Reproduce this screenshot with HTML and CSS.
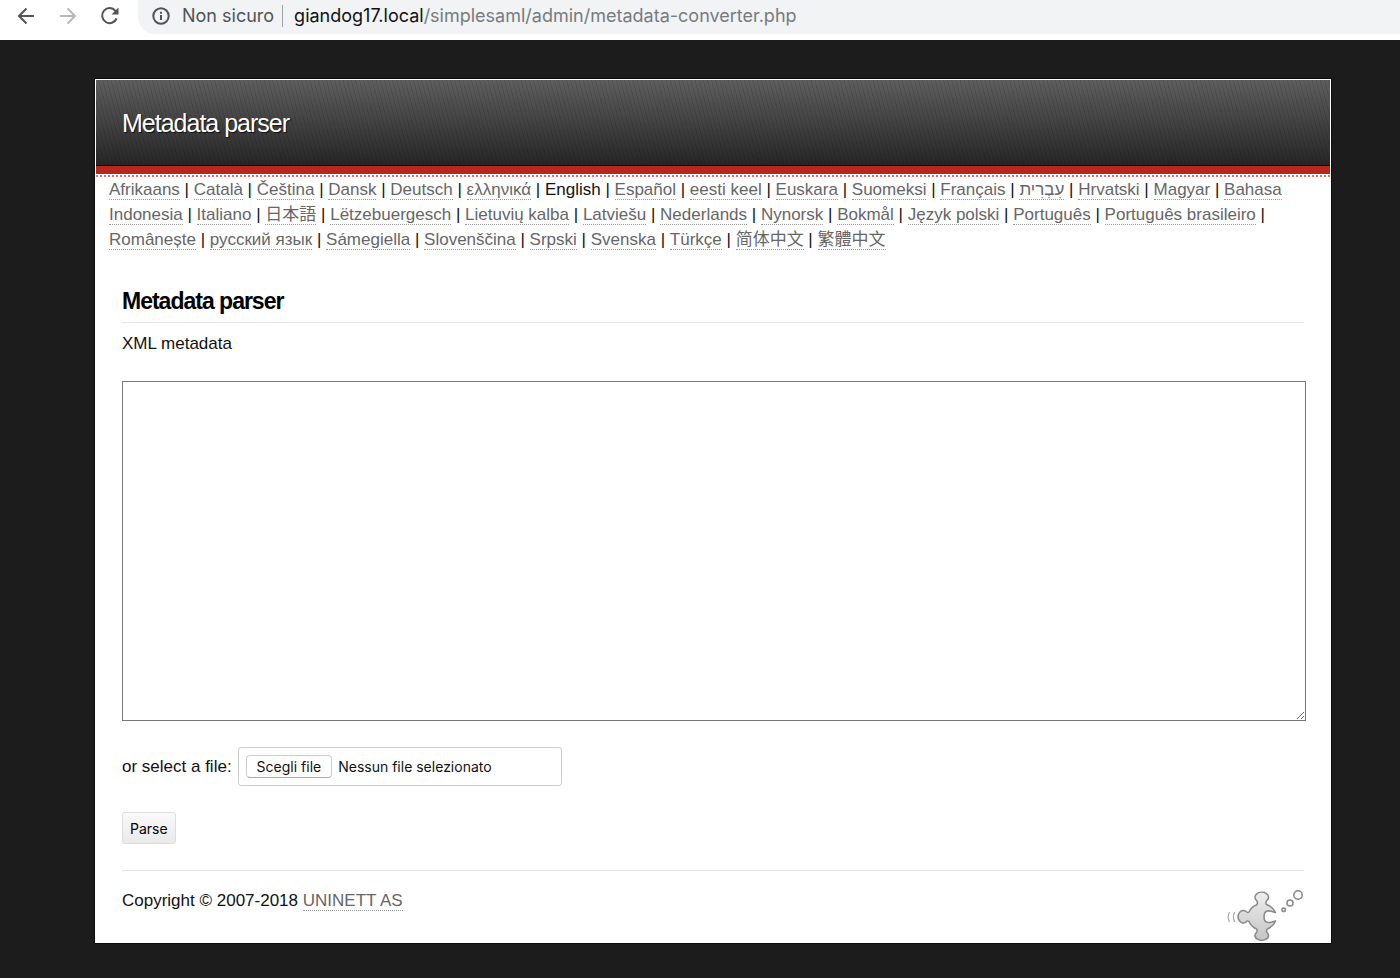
FILE: index.html
```html
<!DOCTYPE html>
<html lang="en">
<head>
    <meta charset="UTF-8">
    <meta name="viewport" content="width=device-width, initial-scale=1.0">
    <title>Metadata parser</title>
    <link rel="stylesheet" href="styles.css">
</head>
<body>
    <div class="toolbar">
        <button class="nav-btn" type="button" aria-label="Indietro">
            <svg width="20" height="20" viewBox="0 0 20 20"><path d="M18 10H3M10.500 2.500L3 10l7.500 7.500"/></svg>
        </button>
        <button class="nav-btn" type="button" aria-label="Avanti" disabled>
            <svg width="20" height="20" viewBox="0 0 20 20"><path d="M2 10h15M9.500 2.500L17 10l-7.500 7.500"/></svg>
        </button>
        <button class="nav-btn" type="button" aria-label="Ricarica">
            <svg width="20" height="20" viewBox="0 0 20 20"><path d="M16.600 12.500a7.500 7.500 0 1 1-1.100-7.600L17 6.500"/><path class="solid" d="M18.500 1.500v7h-7z"/></svg>
        </button>
        <div class="address">
            <svg width="18" height="18" viewBox="0 0 18 18"><circle cx="9" cy="9" r="7.700"/><path d="M9 8v5M9 4.800v2"/></svg>
            <span class="security">Non sicuro</span>
            <span class="url"><span class="host">giandog17.local</span>/simplesaml/admin/metadata-converter.php</span>
        </div>
    </div>

    <div class="wrap">
        <div class="header">
            <h1>Metadata parser</h1>
        </div>

        <ul class="languages">
            <li><a href="#">Afrikaans</a> |</li>
            <li><a href="#">Català</a> |</li>
            <li><a href="#">Čeština</a> |</li>
            <li><a href="#">Dansk</a> |</li>
            <li><a href="#">Deutsch</a> |</li>
            <li><a href="#">ελληνικά</a> |</li>
            <li>English |</li>
            <li><a href="#">Español</a> |</li>
            <li><a href="#">eesti keel</a> |</li>
            <li><a href="#">Euskara</a> |</li>
            <li><a href="#">Suomeksi</a> |</li>
            <li><a href="#">Français</a> |</li>
            <li><a href="#">עִבְרִית</a> |</li>
            <li><a href="#">Hrvatski</a> |</li>
            <li><a href="#">Magyar</a> |</li>
            <li><a href="#">Bahasa Indonesia</a> |</li>
            <li><a href="#">Italiano</a> |</li>
            <li><a href="#" lang="ja">日本語</a> |</li>
            <li><a href="#">Lëtzebuergesch</a> |</li>
            <li><a href="#">Lietuvių kalba</a> |</li>
            <li><a href="#">Latviešu</a> |</li>
            <li><a href="#">Nederlands</a> |</li>
            <li><a href="#">Nynorsk</a> |</li>
            <li><a href="#">Bokmål</a> |</li>
            <li><a href="#">Język polski</a> |</li>
            <li><a href="#">Português</a> |</li>
            <li><a href="#">Português brasileiro</a> |</li>
            <li><a href="#">Românește</a> |</li>
            <li><a href="#">русский язык</a> |</li>
            <li><a href="#">Sámegiella</a> |</li>
            <li><a href="#">Slovenščina</a> |</li>
            <li><a href="#">Srpski</a> |</li>
            <li><a href="#">Svenska</a> |</li>
            <li><a href="#">Türkçe</a> |</li>
            <li><a href="#" lang="zh-Hans">简体中文</a> |</li>
            <li><a href="#" lang="zh-Hant">繁體中文</a></li>
        </ul>

        <div class="content">
            <h2>Metadata parser</h2>
            <form>
                <label class="field-label" for="xmldata">XML metadata</label>
                <textarea id="xmldata" name="xmldata"></textarea>
                <div class="file-row">
                    <label for="xmlfile">or select a file:</label>
                    <input type="file" id="xmlfile" name="xmlfile">
                    <label class="file-box" for="xmlfile">
                        <span class="file-btn">Scegli file</span>
                        <span>Nessun file selezionato</span>
                    </label>
                </div>
                <button class="parse-btn" type="button">Parse</button>
            </form>

            <div class="footer">
                <p>Copyright © 2007-2018 <a href="#">UNINETT AS</a></p>
                <svg class="logo" width="78" height="52" viewBox="0 0 78 52">
                    <defs>
                        <linearGradient id="piece" x1="0" y1="0" x2="0" y2="1">
                            <stop offset="0" stop-color="#eee"/>
                            <stop offset="1" stop-color="#c4c4c4"/>
                        </linearGradient>
                    </defs>
                    <path fill="url(#piece)" stroke="#888" stroke-width="1.500" stroke-linejoin="round" d="M30.500 15Q32.500 13 30.500 10.500A6.800 5 0 1 1 41 10.500Q39 13 40.500 14.500Q46.500 16.500 49.500 22.500C47.500 22.500 45.500 20.800 42.500 20.800C39.500 21 38 23.500 38 26.700C38 30 39.500 32.400 42.500 32.600C45.500 32.600 47.500 31 49.700 31Q47.500 36 41.500 39Q39.500 41 41.500 43A6.800 4.800 0 1 1 30 43Q32 41 30.500 39Q25 36.500 23 31.500Q21.500 30.500 20 32A5 6.300 0 1 1 20 21.500Q21.500 23 23 22Q25 17 30.500 15Z"/>
                    <g fill="none" stroke="#888" stroke-width="1.500">
                        <circle cx="72" cy="5" r="4.200"/>
                        <circle cx="64" cy="13" r="3"/>
                        <circle cx="57.700" cy="19.700" r="1.800"/>
                    </g>
                    <path fill="none" stroke="#aaa" stroke-width="1.200" d="M3.500 22Q.800 27 3.500 32M8.800 22Q6 27 8.800 32"/>
                </svg>
            </div>
        </div>
    </div>
</body>
</html>
```
FILE: styles.css
```css
* {
    box-sizing: border-box;
}

body {
    margin: 0;
    background: #1c1c1c;
    color: #111;
    font-family: 'Liberation Sans', Arial, 'Noto Sans CJK JP', sans-serif;
    font-size: 17px;
    line-height: 25px;
}

/* browser bar */
.toolbar {
    display: flex;
    align-items: flex-start;
    gap: 22px;
    height: 40px;
    padding-left: 16px;
    background: white;
}

.nav-btn {
    width: 20px;
    height: 32px;
    padding: 0;
    border: none;
    background: none;
    color: #505357;
}

.nav-btn:disabled {
    color: #b5b7b9;
}

.toolbar svg {
    display: block;
    flex: none;
    fill: none;
    stroke: currentColor;
    stroke-width: 2;
}

.toolbar svg .solid {
    fill: currentColor;
    stroke: none;
}

.address {
    display: flex;
    align-items: center;
    flex: 1;
    height: 34px;
    margin-left: -4px;
    padding: 0 0 2px 14px;
    background: #f1f3f4;
    border-radius: 0 0 0 17px;
    color: #505357;
    font-family: Inter, sans-serif;
    font-size: 18px;
    line-height: 22px;
    white-space: nowrap;
}

.security {
    margin-left: 12px;
    padding-right: 8px;
    border-right: 1px solid #a0a3a6;
}

.url {
    margin-left: 11px;
    color: #777b7f;
}

.host {
    color: #111;
}

/* page */
.wrap {
    margin: 39px 69px 35px 95px;
    border: 1px solid white;
    outline: 1px solid #0c0c0c;
    background: white;
}

.header {
    padding: 30px 26px 29px;
    background:
        repeating-linear-gradient(75deg, rgba(0, 0, 0, 0.1) 0 1px, transparent 1px 4px),
        linear-gradient(#5e5e5e, #262626);
    border-bottom: 1px solid #0a0a0a;
}

h1,
h2 {
    margin: 0;
    letter-spacing: -1px;
}

h1 {
    color: white;
    font-size: 25px;
    font-weight: normal;
    line-height: 26px;
    text-shadow: 1px 1px 1px #111;
}

.languages {
    margin: 0;
    padding: 0 13px;
    border-top: 8px solid #b9261b;
    list-style: none;
}

.languages::before {
    content: '';
    display: block;
    margin: 0 -13px;
    padding-top: 1px;
    border-bottom: 2px dotted #e0706a;
}

.languages li {
    display: inline;
}

a {
    color: #666;
    text-decoration: none;
    border-bottom: 1px dotted #999;
}

[lang='zh-Hans'] {
    font-family: 'Liberation Sans', 'Noto Sans CJK SC', sans-serif;
}

[lang='zh-Hant'] {
    font-family: 'Liberation Sans', 'Noto Sans CJK TC', sans-serif;
}

.content {
    padding: 35px 26px 0;
}

h2 {
    padding-bottom: 7px;
    border-bottom: 1px solid #e6e6e6;
    color: black;
    font-size: 23px;
    line-height: 28px;
}

.field-label {
    display: block;
    padding: 8px 0 25px;
}

textarea {
    display: block;
    box-sizing: content-box;
    width: 100%;
    height: 338px;
    padding: 0;
    border: 1px solid #777;
    font: 15px 'Liberation Mono', monospace;
}

.file-row {
    position: relative;
    display: flex;
    align-items: center;
    gap: 6px;
    margin: 26px 0;
}

/* the label box stands in for the native control */
.file-row input {
    position: absolute;
    width: 1px;
    height: 1px;
    opacity: 0;
}

.file-box {
    display: flex;
    align-items: center;
    gap: 6px;
    width: 324px;
    height: 39px;
    padding: 0 7px;
    border: 1px solid #ccc;
    border-radius: 3px;
    font-family: Inter, sans-serif;
    font-size: 14px;
}

.file-btn {
    padding: 0 10px;
    border: 1px solid #ccc;
    border-bottom-color: #aaa;
    border-radius: 4px;
    line-height: 21px;
}

.parse-btn {
    display: block;
    height: 32px;
    padding: 0 7px;
    border: 1px solid #ddd;
    border-radius: 3px;
    background: linear-gradient(#fafafa, #e9e9e9);
    color: black;
    font-family: Inter, sans-serif;
    font-size: 14px;
}

.footer {
    display: flex;
    justify-content: space-between;
    margin-top: 26px;
    padding-top: 17px;
    border-top: 1px solid #e2e2e2;
}

.footer p {
    margin: 0;
}

.logo {
    display: block;
    margin-top: 2px;
}
```
